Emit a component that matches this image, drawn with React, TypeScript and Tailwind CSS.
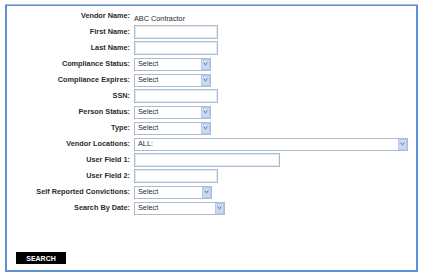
import React from "react";

const font = { fontFamily: '"Liberation Sans", Arial, sans-serif' };

function Input({ w }: { w: string }) {
  return (
    <div
      className={`${w} h-[14px] border border-[#aebccd] bg-white shadow-[inset_0_0_0_1px_#e4eaf2]`}
    />
  );
}

function Select({ w, text }: { w: string; text: string }) {
  return (
    <div
      className={`${w} h-[13px] border border-[#aebccd] bg-white flex items-center justify-between`}
    >
      <span className="pl-[3px] text-[7.3px] leading-none text-[#2b2b2b]">{text}</span>
      <div className="w-[9px] h-[11px] bg-[#c9d8f5] border border-[#b4c7ee] flex items-center justify-center">
        <svg width="5" height="4" viewBox="0 0 5 4">
          <path d="M0.6 0.9 L2.5 2.7 L4.4 0.9" fill="none" stroke="#4a5f88" strokeWidth="1" />
        </svg>
      </div>
    </div>
  );
}

type Row = { label: string; ctrl: React.ReactNode };

export default function App() {
  const rows: Row[] = [
    { label: "Vendor Name:", ctrl: <span className="text-[7.3px] text-[#2b2b2b] font-normal">ABC Contractor</span> },
    { label: "First Name:", ctrl: <Input w="w-[84px]" /> },
    { label: "Last Name:", ctrl: <Input w="w-[84px]" /> },
    { label: "Compliance Status:", ctrl: <Select w="w-[77px]" text="Select" /> },
    { label: "Compliance Expires:", ctrl: <Select w="w-[77px]" text="Select" /> },
    { label: "SSN:", ctrl: <Input w="w-[84px]" /> },
    { label: "Person Status:", ctrl: <Select w="w-[77px]" text="Select" /> },
    { label: "Type:", ctrl: <Select w="w-[77px]" text="Select" /> },
    { label: "Vendor Locations:", ctrl: <Select w="w-[274px]" text="ALL:" /> },
    { label: "User Field 1:", ctrl: <Input w="w-[146px]" /> },
    { label: "User Field 2:", ctrl: <Input w="w-[84px]" /> },
    { label: "Self Reported Convictions:", ctrl: <Select w="w-[78px]" text="Select" /> },
    { label: "Search By Date:", ctrl: <Select w="w-[91px]" text="Select" /> },
  ];
  return (
    <div className="w-[423px] h-[274px] bg-white pt-[4px] pl-[5px]" style={font}>
      <div className="w-[413px] h-[268px] border-t border-[#a6b7cd]">
        <div className="h-full border-2 border-t border-[#5e90d8] flex flex-col pt-[2px]">
          {rows.map((r) => (
            <div key={r.label} className="flex items-center h-[16px]">
              <div className="w-[123px] text-right text-[7.3px] font-bold text-[#2b2b2b] leading-none">
                {r.label}
              </div>
              <div className="ml-[4px]">{r.ctrl}</div>
            </div>
          ))}
          <div className="mt-[36px] ml-[9px] w-[50px] h-[12px] bg-black flex items-center justify-center">
            <span className="text-white font-bold text-[7px] leading-none">SEARCH</span>
          </div>
        </div>
      </div>
    </div>
  );
}
